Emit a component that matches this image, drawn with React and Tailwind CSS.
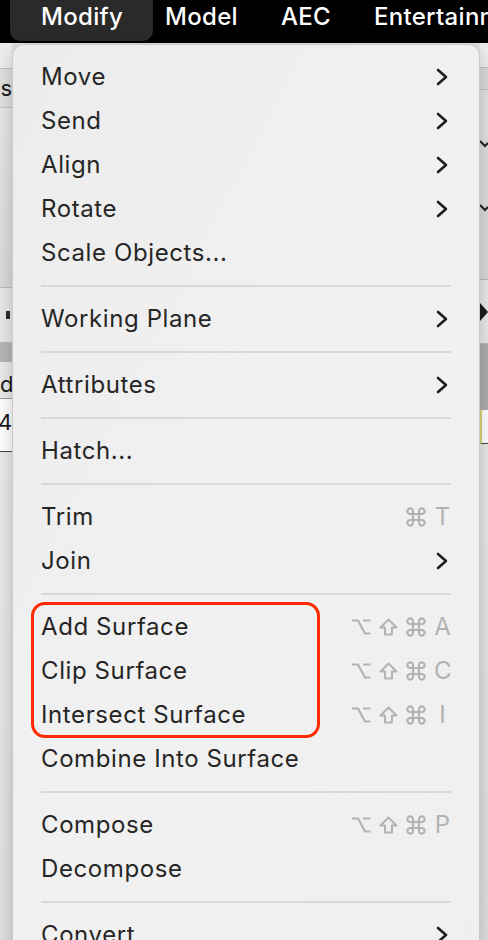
import React from "react";

const FONT = { fontFamily: "Inter, 'Noto Sans', 'DejaVu Sans', sans-serif" };

const sections = [
  [
    { label: "Move", sub: true },
    { label: "Send", sub: true },
    { label: "Align", sub: true },
    { label: "Rotate", sub: true },
    { label: "Scale Objects..." },
  ],
  [{ label: "Working Plane", sub: true }],
  [{ label: "Attributes", sub: true }],
  [{ label: "Hatch..." }],
  [
    { label: "Trim", keys: ["cmd"], key: "T" },
    { label: "Join", sub: true },
  ],
  [
    { label: "Add Surface", keys: ["opt", "shift", "cmd"], key: "A" },
    { label: "Clip Surface", keys: ["opt", "shift", "cmd"], key: "C" },
    { label: "Intersect Surface", keys: ["opt", "shift", "cmd"], key: "I" },
    { label: "Combine Into Surface" },
  ],
  [
    { label: "Compose", keys: ["opt", "shift", "cmd"], key: "P" },
    { label: "Decompose" },
  ],
  [{ label: "Convert", sub: true }],
];

function Chevron() {
  return (
    <svg width="14" height="20" viewBox="0 0 14 20" className="mr-[2px]">
      <polyline points="3,3 11,10 3,17" fill="none" stroke="#1e1e1e" strokeWidth="2.6" strokeLinecap="round" strokeLinejoin="round" />
    </svg>
  );
}

function KeyIcon({ k }) {
  const c = "#b3b3b3";
  if (k === "opt")
    return (
      <svg width="20" height="18" viewBox="0 0 20 18">
        <path d="M1,2.5 H7 L14,15.5 H19.5 M12,2.5 H19.5" fill="none" stroke={c} strokeWidth="2.2" />
      </svg>
    );
  if (k === "shift")
    return (
      <svg width="19" height="18" viewBox="0 0 19 18">
        <polygon points="9.5,1.5 17.5,9.5 13,9.5 13,16.5 6,16.5 6,9.5 1.5,9.5" fill="none" stroke={c} strokeWidth="2" strokeLinejoin="round" />
      </svg>
    );
  return (
    <svg width="20" height="20" viewBox="0 0 20 20">
      <path d="M7,7 V4.3 A2.8,2.8 0 1 0 4.3,7 H15.7 A2.8,2.8 0 1 0 13,4.3 V15.7 A2.8,2.8 0 1 0 15.7,13 H4.3 A2.8,2.8 0 1 0 7,15.7 Z" fill="none" stroke={c} strokeWidth="2.2" />
    </svg>
  );
}

function Item({ item }) {
  return (
    <div className="flex items-center justify-between h-[44px] pl-[28px] pr-[28px]">
      <span className="text-[24px] text-[#262626] tracking-[0.6px] whitespace-nowrap">{item.label}</span>
      {item.sub && <Chevron />}
      {item.keys && (
        <span className="flex items-center gap-[8px] text-[#b3b3b3]">
          {item.keys.map((k, i) => (
            <KeyIcon key={i} k={k} />
          ))}
          <span className="text-[24px] leading-none w-[17px] text-center">{item.key}</span>
        </span>
      )}
    </div>
  );
}

function Separator() {
  return (
    <div className="h-[22px] flex items-center px-[28px]">
      <div className="h-[2px] w-full bg-[#d9d9d9]" />
    </div>
  );
}

function LeftStrip() {
  return (
    <div className="w-[12px] flex flex-col overflow-hidden text-[#1a1a1a] text-[22px]">
      <div className="h-[26px] bg-[#ececec] border-b border-[#bdbdbd]" />
      <div className="h-[39px] bg-[#dcdcdc] border-b border-[#c2c2c2] flex items-center justify-end leading-none">s</div>
      <div className="h-[180px] bg-gradient-to-b from-[#e2e2e2] to-[#d6d6d6] border-b border-[#b8b8b8]" />
      <div className="h-[55px] bg-[#e4e4e4] border-b border-[#b8b8b8] flex items-center justify-end pr-[2px]">
        <div className="w-[4px] h-[8px] bg-[#2a2a2a]" />
      </div>
      <div className="h-[19px] bg-[#b3b3b3]" />
      <div className="h-[37px] bg-[#e6e6e6] border-b border-[#9a9a9a] flex items-center leading-none pt-[8px]">d</div>
      <div className="h-[53px] bg-[#fafafa] border-b border-[#444] flex items-start pt-[12px] leading-none tracking-tight">
        <span className="-ml-[2px]">40</span>
      </div>
      <div className="flex-1 bg-gradient-to-b from-[#e6e6e4] to-[#dcdcda]" />
    </div>
  );
}

function RightStrip() {
  return (
    <div className="w-[8px] flex flex-col overflow-hidden">
      <div className="h-[25px] bg-[#ececec] border-b border-[#bdbdbd]" />
      <div className="h-[22px] bg-[#d6d6d6] border-b border-[#c2c2c2]" />
      <div className="h-[48px] bg-[#dedede]" />
      <div className="h-[66px] bg-[#dadada] flex items-start pt-[2px]">
        <svg width="8" height="8"><polyline points="0,1 5,6 8,3" fill="none" stroke="#222" strokeWidth="2" /></svg>
      </div>
      <div className="h-[76px] bg-[#d6d6d6] border-b border-[#b8b8b8] flex items-start">
        <svg width="8" height="8"><polyline points="0,1 5,6 8,3" fill="none" stroke="#222" strokeWidth="2" /></svg>
      </div>
      <div className="h-[64px] bg-[#e4e4e4] border-b border-[#b8b8b8] flex items-center">
        <svg width="8" height="18"><polygon points="0,0 8,9 0,18" fill="#1a1a1a" /></svg>
      </div>
      <div className="h-[66px] bg-[#a9a9a9]" />
      <div className="h-[34px] bg-[#fafafa] border-l-2 border-[#d8d27a] border-b border-b-[#444]" />
      <div className="flex-1 bg-gradient-to-b from-[#e4e4e2] to-[#dadad8]" />
    </div>
  );
}

export default function App() {
  return (
    <div style={FONT} className="relative w-[488px] h-[940px] overflow-hidden bg-[#e0e0e0] flex flex-col">
      <div className="h-[43px] bg-black flex items-start text-white text-[24px] font-medium shrink-0 overflow-hidden whitespace-nowrap">
        <div className="shrink-0 ml-[10px] w-[143px] h-[41px] bg-[#2a2a2a] rounded-b-[10px] flex items-center pl-[31px] pb-[7px] tracking-[0.3px]">Modify</div>
        <div className="shrink-0 h-[41px] flex items-center pl-[12px] pb-[7px] tracking-[0.3px]">Model</div>
        <div className="shrink-0 h-[41px] flex items-center pl-[43px] pb-[7px] tracking-[0.3px]">AEC</div>
        <div className="shrink-0 h-[41px] flex items-center pl-[43px] pb-[7px] tracking-[0.3px]">Entertainment</div>
      </div>
      <div className="flex-1 flex justify-between">
        <LeftStrip />
        <RightStrip />
      </div>

      <div className="absolute left-[12px] top-[44px] w-[468px] h-[920px] rounded-[12px] bg-gradient-to-br from-[#ececec] via-[#f1f1f1] to-[#efefef] border border-[#c9c9c9] shadow-[0_4px_14px_rgba(0,0,0,0.18)] pt-[10px]">
        {sections.map((sec, i) => (
          <div key={i}>
            {i > 0 && <Separator />}
            {sec.map((item) => (
              <Item key={item.label} item={item} />
            ))}
          </div>
        ))}
        <div className="absolute left-[18px] top-[557px] w-[289px] h-[136px] border-[3px] border-[#ff2a00] rounded-[14px]" />
      </div>
    </div>
  );
}
